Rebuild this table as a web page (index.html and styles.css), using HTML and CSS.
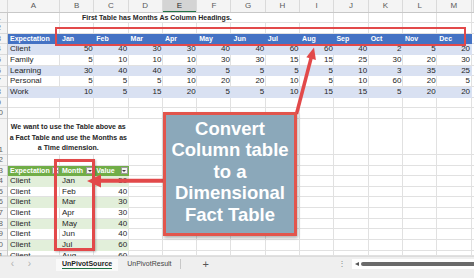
FILE: index.html
```html
<!DOCTYPE html>
<html>
<head>
<meta charset="utf-8">
<title>UnPivot</title>
<link rel="stylesheet" href="styles.css">
</head>
<body>
<div class="sheet">
  <div class="colhead">
    <div></div><div>A</div><div>B</div><div>C</div><div>D</div><div class="sel">E</div><div>F</div><div>G</div><div>H</div><div>I</div><div>J</div><div>K</div><div>L</div><div>M</div><div></div>
  </div>
  <div class="row"><div class="rh s">1</div><div class="c title">First Table has Months As Column Headings.</div></div>
  <div class="row"><div class="rh s">2</div></div>
  <div class="row th-blue"><div class="rh s">3</div><div class="c">Expectation</div><div class="c">Jan</div><div class="c">Feb</div><div class="c">Mar</div><div class="c">Apr</div><div class="c">May</div><div class="c">Jun</div><div class="c">Jul</div><div class="c">Aug</div><div class="c">Sep</div><div class="c">Oct</div><div class="c">Nov</div><div class="c">Dec</div></div>
  <div class="row band-blue"><div class="rh s">4</div><div class="c">Client</div><div class="c n">50</div><div class="c n">40</div><div class="c n">30</div><div class="c n">30</div><div class="c n">40</div><div class="c n">40</div><div class="c n">60</div><div class="c n">60</div><div class="c n">40</div><div class="c n">2</div><div class="c n">5</div><div class="c n">20</div></div>
  <div class="row"><div class="rh s">5</div><div class="c">Family</div><div class="c n">5</div><div class="c n">10</div><div class="c n">10</div><div class="c n">10</div><div class="c n">30</div><div class="c n">30</div><div class="c n">15</div><div class="c n">15</div><div class="c n">25</div><div class="c n">30</div><div class="c n">20</div><div class="c n">30</div></div>
  <div class="row band-blue"><div class="rh s">6</div><div class="c">Learning</div><div class="c n">30</div><div class="c n">40</div><div class="c n">40</div><div class="c n">30</div><div class="c n">5</div><div class="c n">5</div><div class="c n">5</div><div class="c n">5</div><div class="c n">10</div><div class="c n">3</div><div class="c n">35</div><div class="c n">25</div></div>
  <div class="row"><div class="rh s">7</div><div class="c">Personal</div><div class="c n">5</div><div class="c n">5</div><div class="c n">5</div><div class="c n">10</div><div class="c n">20</div><div class="c n">20</div><div class="c n">10</div><div class="c n">5</div><div class="c n">10</div><div class="c n">60</div><div class="c n">20</div><div class="c n">5</div></div>
  <div class="row band-blue"><div class="rh s">8</div><div class="c">Work</div><div class="c n">10</div><div class="c n">5</div><div class="c n">15</div><div class="c n">20</div><div class="c n">5</div><div class="c n">5</div><div class="c n">10</div><div class="c n">15</div><div class="c n">15</div><div class="c n">5</div><div class="c n">20</div><div class="c n">20</div></div>
  <div class="row"><div class="rh s">9</div></div>
  <div class="row"><div class="rh">10</div></div>
  <div class="row tall"><div class="rh">11</div><div class="c note"><span>We want to use the Table above as</span><span>a Fact Table and use the Months as</span><span>a Time dimension.</span></div></div>
  <div class="row"><div class="rh">12</div></div>
  <div class="row th-green"><div class="rh">13</div><div class="c">Expectation<i class="dd"></i></div><div class="c">Month<i class="dd"></i></div><div class="c">Value<i class="dd"></i></div></div>
  <div class="row band-green"><div class="rh">14</div><div class="c">Client</div><div class="c">Jan</div><div class="c n">50</div></div>
  <div class="row"><div class="rh">15</div><div class="c">Client</div><div class="c">Feb</div><div class="c n">40</div></div>
  <div class="row band-green"><div class="rh">16</div><div class="c">Client</div><div class="c">Mar</div><div class="c n">30</div></div>
  <div class="row"><div class="rh">17</div><div class="c">Client</div><div class="c">Apr</div><div class="c n">30</div></div>
  <div class="row band-green"><div class="rh">18</div><div class="c">Client</div><div class="c">May</div><div class="c n">40</div></div>
  <div class="row"><div class="rh">19</div><div class="c">Client</div><div class="c">Jun</div><div class="c n">40</div></div>
  <div class="row band-green"><div class="rh">20</div><div class="c">Client</div><div class="c">Jul</div><div class="c n">60</div></div>
  <div class="row cut"><div class="rh">21</div><div class="c">Client</div><div class="c">Aug</div><div class="c n">60</div></div>

  <div class="frame frame-top"></div>
  <div class="frame frame-month"></div>
  <svg class="arrows" width="474" height="256" viewBox="0 0 474 256">
    <line x1="164" y1="180.7" x2="99" y2="180.7" stroke="#e2494a" stroke-width="4"/>
    <polygon points="87,181 101,174.5 101,187.5" fill="#e2494a"/>
    <line x1="296.5" y1="114" x2="311.1" y2="58" stroke="#e2494a" stroke-width="3.5"/>
    <polygon points="314,47.5 315.9,59.9 306.3,57.3" fill="#e2494a"/>
  </svg>
  <div class="callout">Convert<br>Column table<br>to a<br>Dimensional<br>Fact Table</div>
</div>
<div class="tabbar">
  <span class="nav first">&#8249;</span><span class="nav">&#8250;</span>
  <div class="tab active"><span>UnPivotSource</span></div>
  <div class="tab">UnPivotResult</div>
  <span class="sep"></span>
  <span class="add">+</span>
  <span class="grip">&#8942;</span>
  <div class="hscroll"><span class="larr"></span><span class="thumb"></span></div>
</div>
</body>
</html>
```
FILE: styles.css
```css
*{box-sizing:border-box;margin:0;padding:0}
html,body{width:474px;height:278px;overflow:hidden;background:#fff}
body{font-family:"Liberation Sans",Arial,sans-serif;color:#262626}
.sheet{position:relative;height:256px;overflow:hidden}
.colhead{display:grid;grid-template-columns:8px 52px repeat(12,34.3px) 1fr;height:12.5px;background:#f4f4f4;border-bottom:1px solid #c8c8c8;font-size:8px;line-height:11.5px;color:#5a5a5a;text-align:center}
.colhead>div{border-right:1px solid #dadada}
.colhead .sel{background:#d4d4d4;color:#2a2a2a;box-shadow:inset 0 -1px #217346}
.row{display:grid;grid-template-columns:8px 52px repeat(12,34.3px) 1fr;height:10.65px;line-height:10.65px;font-size:8px;
  background-image:linear-gradient(to top,#e1e1e1 1px,transparent 1px),linear-gradient(to right,transparent 59px,#e1e1e1 59px 60px,transparent 60px),repeating-linear-gradient(to right,transparent 0 33.3px,#e1e1e1 33.3px 34.3px);
  background-position:0 0,0 0,60px 0;background-repeat:no-repeat}
.row.cut{height:5.1px;overflow:hidden}
.rh{grid-column:1;background:#f4f4f4;border-right:1px solid #c8c8c8;box-shadow:inset 0 -1px #dadada;display:flex;justify-content:flex-end;overflow:hidden;padding-right:4px;color:#666;font-size:8px;white-space:nowrap}
.rh.s{padding-right:6px}
.c{overflow:hidden;white-space:nowrap;padding:0 2px}
.n{text-align:right;padding-right:1.5px}
.title{grid-column:3/10;background:#fff;box-shadow:inset 0 -1px #e1e1e1;font-weight:700;font-size:7px;padding-left:22px}
.th-blue .c{background:#4472c4;color:#fff;font-weight:700;font-size:7px}
.band-blue .c{background:#d9e1f2}
.th-green .c{background:#70ad47;color:#fff;font-weight:700;font-size:7px;display:flex;align-items:center;justify-content:space-between;padding-right:1px}
.band-green .c{background:#e2efda}
.dd{width:7px;height:7px;background:#f3f3f3;border:1px solid #9a9a9a;display:flex;align-items:center;justify-content:center}
.dd::after{content:"";border-left:2px solid transparent;border-right:2px solid transparent;border-top:2.5px solid #404040}
.tall{height:36px}
.tall .rh{align-items:flex-end;line-height:11px}
.note{grid-column:2/5;background:#fff;box-shadow:inset 0 -1px #e1e1e1;font-weight:700;font-size:7px;line-height:10.5px;text-align:center;display:flex;flex-direction:column;justify-content:flex-end;padding:0 0 1px}
.frame{position:absolute;border:2px solid #e2494a}
.frame-top{left:55px;top:27px;width:411px;height:19px}
.frame-month{left:54px;top:159px;width:41px;height:92px;border-width:3px;box-shadow:1px 1px 2px rgba(0,0,0,.25)}
.arrows{position:absolute;left:0;top:0}
.callout{position:absolute;left:163px;top:112px;width:134px;height:124px;background:#8ba8ba;border:3px solid #e2554c;box-shadow:1px 2px 3px rgba(0,0,0,.3);color:#fff;font-weight:700;font-size:18.5px;line-height:21.5px;text-align:center;display:flex;align-items:center;justify-content:center;padding-bottom:5px}
.tabbar{height:22px;background:#efefef;border-top:1px solid #dcdcdc;display:flex;align-items:flex-start;padding-top:1.5px;font-size:7px;color:#444}
.nav{width:17px;text-align:center;color:#b0b0b0;font-size:10px;line-height:10px}
.nav.first{margin-left:4px}
.tab{padding:0 6px;line-height:10px;height:12px}
.tab.active{margin-left:18px;font-weight:700;color:#1f1f1f;background:#f9f9f9}
.tab.active span{display:inline-block;line-height:9px;border-bottom:1.5px solid #1e7145}
.tab+.tab{margin-left:3px}
.sep{width:1px;height:10px;background:#c8c8c8;margin-left:2px}
.add{margin-left:22px;font-size:11px;line-height:10px;color:#555}
.grip{margin-left:auto;margin-right:6px;width:8px;text-align:center;color:#888;font-size:8px;line-height:10px}
.hscroll{width:122px;height:10px;background:#fff;display:flex;align-items:center;padding-left:3px}
.larr{width:0;height:0;border-right:4px solid #555;border-top:2.5px solid transparent;border-bottom:2.5px solid transparent;margin-right:2px}
.thumb{flex:1;height:4px;background:#6a6a6a;border-radius:2px 0 0 2px}
```
